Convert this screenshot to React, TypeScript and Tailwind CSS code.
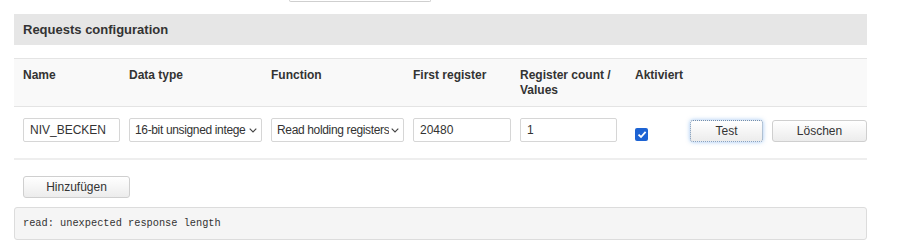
import React from 'react'

const font = { fontFamily: '"Liberation Sans", Arial, sans-serif' }

function Chevron() {
  return (
    <svg width="8" height="5" viewBox="0 0 8 5" className="shrink-0">
      <path d="M0.7 0.7 L4 4 L7.3 0.7" fill="none" stroke="#444" strokeWidth="1.1" />
    </svg>
  )
}

function TextField({ value, width }: { value: string; width: string }) {
  return (
    <div className={`${width} h-[24px] flex items-center px-[6px] border border-[#d6d6d6] rounded-[2px] bg-white text-[12px] text-[#333]`}>
      {value}
    </div>
  )
}

function SelectField({ value, width }: { value: string; width: string }) {
  return (
    <div className={`${width} h-[24px] flex items-center gap-[2px] pl-[5px] pr-[4px] border border-[#d6d6d6] rounded-[2px] bg-white text-[12px] tracking-[-0.35px] text-[#333]`}>
      <span className="flex-1 min-w-0 whitespace-nowrap overflow-hidden">{value}</span>
      <Chevron />
    </div>
  )
}

function Button({ label, width, focused }: { label: string; width: string; focused?: boolean }) {
  return (
    <div
      className={`${width} h-[22px] flex items-center justify-center rounded-[3px] text-[12px] text-[#333] bg-gradient-to-b from-white to-[#ececec] ${
        focused
          ? 'border border-dotted border-[#6f8fb3] shadow-[0_0_4px_rgba(80,150,230,0.55)]'
          : 'border border-[#cfcfcf]'
      }`}
    >
      {label}
    </div>
  )
}

export default function App() {
  return (
    <div className="w-[903px] h-[251px] bg-white overflow-hidden" style={font}>
      <div className="ml-[289px] w-[142px] h-[2px] border-b border-x border-[#cfcfcf] rounded-b-[3px]" />

      <div className="mx-[14px] w-[853px] mt-[12px]">
        <div className="h-[31px] flex items-center pl-[9px] bg-[#e6e6e6] text-[13px] font-bold text-[#333]">
          Requests configuration
        </div>

        <div className="mt-[13px] border-t border-[#e4e4e4]">
          <div className="h-[48px] flex gap-[9px] pl-[9px] pt-[9px] bg-[#f9f9f9] border-b border-[#e4e4e4] text-[12px] font-bold text-[#333] leading-[15px]">
            <div className="w-[97px]">Name</div>
            <div className="w-[133px]">Data type</div>
            <div className="w-[133px]">Function</div>
            <div className="w-[98px]">First register</div>
            <div className="w-[106px]">Register count /<br />Values</div>
            <div className="w-[80px]">Aktiviert</div>
          </div>

          <div className="h-[53px] flex items-start gap-[9px] pl-[9px] pt-[11px] border-b-2 border-[#eeeeee]">
            <TextField value="NIV_BECKEN" width="w-[97px]" />
            <SelectField value="16-bit unsigned intege" width="w-[133px]" />
            <SelectField value="Read holding registers" width="w-[133px]" />
            <TextField value="20480" width="w-[98px]" />
            <TextField value="1" width="w-[97px]" />
            <div className="ml-[9px] mt-[10px] w-[13px] h-[13px] rounded-[2px] bg-[#1d63d3] flex items-center justify-center">
              <svg width="10" height="9" viewBox="0 0 10 9">
                <path d="M1.5 4.6 L4 7 L8.6 1.8" fill="none" stroke="white" strokeWidth="1.8" />
              </svg>
            </div>
            <div className="ml-[33px] mt-[2px] flex gap-[9px]">
              <Button label="Test" width="w-[73px]" focused />
              <Button label="Löschen" width="w-[95px]" />
            </div>
          </div>
        </div>

        <div className="mt-[16px] pl-[9px]">
          <Button label="Hinzufügen" width="w-[107px]" />
        </div>

        <div className="mt-[9px] h-[33px] flex items-center pl-[8px] bg-[#f5f5f5] border border-[#dcdcdc] rounded-[3px] text-[10.3px] text-[#333]" style={{ fontFamily: '"Liberation Mono", "Courier New", monospace' }}>
          read: unexpected response length
        </div>
      </div>
    </div>
  )
}
